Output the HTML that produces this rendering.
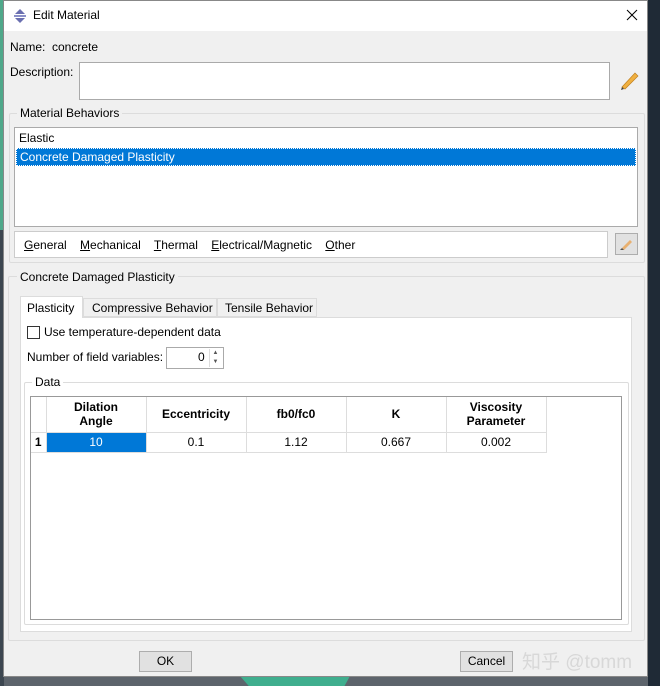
<!DOCTYPE html>
<html><head><style>
*{box-sizing:border-box;margin:0;padding:0}
body{width:660px;height:686px;background:#5d646c;position:relative;overflow:hidden;font-family:"Liberation Sans",sans-serif;font-size:12px;color:#000}
.a{position:absolute}
.win{left:3px;top:0;width:645px;height:677px;background:#f0f0f0;border:1px solid #888}
.u{text-decoration:underline}
.grp{border:1px solid #dcdcdc;border-radius:2px}
.lbl{background:#f0f0f0;padding:0 3px}
th,td{border-right:1px solid #ddd;border-bottom:1px solid #ddd;text-align:center;font-size:12px}
.btn{background:#e1e1e1;border:1px solid #adadad;text-align:center;line-height:19px}
</style></head><body>
<div class="a" style="left:648px;top:0;width:12px;height:686px;background:#1f2a36"></div>
<div class="a" style="left:0;top:0;width:4px;height:230px;background:#4fa88a"></div>
<div class="a" style="left:0;top:230px;width:4px;height:456px;background:#3c4650"></div>
<div class="a" style="left:240px;top:676px;width:110px;height:10px;background:#3fae8e;clip-path:polygon(0 0,100% 0,95% 100%,8% 100%)"></div>
<div class="a win"></div>
<div class="a" style="left:4px;top:1px;width:643px;height:30px;background:#fff"></div>
<svg class="a" style="left:12px;top:8px" width="16" height="16" viewBox="0 0 16 16"><path d="M8 1L3 6h10z" fill="#6a6fb0"/><rect x="2" y="7" width="12" height="2" fill="#8a8fc8"/><path d="M8 15L3 10h10z" fill="#6a6fb0"/></svg>
<div class="a" style="left:33px;top:8px;font-size:12px">Edit Material</div>
<svg class="a" style="left:626px;top:9px" width="12" height="12" viewBox="0 0 12 12"><path d="M1 1L11 11M11 1L1 11" stroke="#000" stroke-width="1"/></svg>
<div class="a" style="left:10px;top:40px">Name:&nbsp; concrete</div>
<div class="a" style="left:10px;top:65px">Description:</div>
<div class="a" style="left:79px;top:62px;width:531px;height:38px;background:#fff;border:1px solid #aaa"></div>
<svg class="a" style="left:618px;top:69px" width="22" height="22" viewBox="0 0 22 22"><path d="M4 18L17 4l3 3L7 20z" fill="#f0b040" stroke="#c08020" stroke-width=".7"/><path d="M4 18l-1 3 3-1z" fill="#444"/></svg>
<div class="a grp" style="left:9px;top:113px;width:636px;height:150px"></div>
<div class="a lbl" style="left:17px;top:106px">Material Behaviors</div>
<div class="a" style="left:14px;top:127px;width:624px;height:100px;background:#fff;border:1px solid #aaa"></div>
<div class="a" style="left:19px;top:131px">Elastic</div>
<div class="a" style="left:16px;top:148px;width:620px;height:18px;background:#0078d7;border:1px dotted #fff;color:#fff;padding-left:3px;line-height:16px">Concrete Damaged Plasticity</div>
<div class="a" style="left:14px;top:231px;width:594px;height:27px;background:#fff;border:1px solid #ccc"></div>
<div class="a" style="left:24px;top:238px;word-spacing:0"><span class="u">G</span>eneral&nbsp;&nbsp;&nbsp; <span class="u">M</span>echanical&nbsp;&nbsp;&nbsp; <span class="u">T</span>hermal&nbsp;&nbsp;&nbsp; <span class="u">E</span>lectrical/Magnetic&nbsp;&nbsp;&nbsp; <span class="u">O</span>ther</div>
<div class="a btn" style="left:615px;top:233px;width:23px;height:22px"></div>
<svg class="a" style="left:618px;top:236px" width="16" height="16" viewBox="0 0 16 16"><path d="M4 12L12 4l2 2-8 8z" fill="#e8b070"/><path d="M2 14l2-2 2 2z" fill="#555"/></svg>
<div class="a grp" style="left:8px;top:276px;width:637px;height:365px"></div>
<div class="a lbl" style="left:17px;top:270px">Concrete Damaged Plasticity</div>
<div class="a" style="left:20px;top:317px;width:612px;height:315px;background:#fff;border:1px solid #dcdcdc"></div>
<div class="a" style="left:20px;top:296px;width:63px;height:22px;background:#fff;border:1px solid #dcdcdc;border-bottom:none;padding:4px 0 0 6px">Plasticity</div>
<div class="a" style="left:83px;top:298px;width:134px;height:19px;background:#f0f0f0;border:1px solid #dcdcdc;padding:2px 0 0 8px">Compressive Behavior</div>
<div class="a" style="left:217px;top:298px;width:100px;height:19px;background:#f0f0f0;border:1px solid #dcdcdc;padding:2px 0 0 7px">Tensile Behavior</div>
<div class="a" style="left:27px;top:326px;width:13px;height:13px;border:1px solid #333;background:#fff"></div>
<div class="a" style="left:44px;top:325px">Use temperature-dependent data</div>
<div class="a" style="left:27px;top:350px">Number of field variables:</div>
<div class="a" style="left:166px;top:347px;width:58px;height:22px;background:#fff;border:1px solid #aaa"></div>
<div class="a" style="left:198px;top:350px">0</div>
<div class="a" style="left:209px;top:349px;width:12px;height:18px;font-size:6px;line-height:9px;color:#555;text-align:center;border-left:1px solid #ddd">▲<br>▼</div>
<div class="a grp" style="left:24px;top:382px;width:605px;height:243px"></div>
<div class="a" style="left:32px;top:375px;background:#fff;padding:0 3px">Data</div>
<div class="a" style="left:30px;top:396px;width:592px;height:224px;background:#fff;border:1px solid #999"></div>
<table class="a" style="left:31px;top:397px;border-collapse:collapse;font-weight:bold">
<tr style="height:35px"><th style="width:15px"></th><th style="width:100px">Dilation<br>Angle</th><th style="width:100px">Eccentricity</th><th style="width:100px">fb0/fc0</th><th style="width:100px">K</th><th style="width:100px">Viscosity<br>Parameter</th></tr>
<tr style="height:20px;font-weight:normal"><td style="font-weight:bold">1</td><td style="background:#0078d7;color:#fff">10</td><td>0.1</td><td>1.12</td><td>0.667</td><td>0.002</td></tr>
</table>
<div class="a btn" style="left:139px;top:651px;width:53px;height:21px">OK</div>
<div class="a btn" style="left:460px;top:651px;width:53px;height:21px">Cancel</div>
<div class="a" style="left:522px;top:647px;font-size:19px;color:#d8d8d8;font-family:'Liberation Sans','Noto Sans CJK SC',sans-serif">知乎 @tomm</div>
</body></html>
